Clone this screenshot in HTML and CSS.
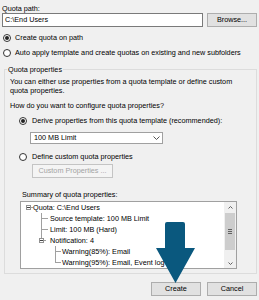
FILE: index.html
```html
<!DOCTYPE html>
<html lang="en">
<head>
<meta charset="utf-8">
<title>Create Quota</title>
<link rel="stylesheet" href="styles.css">
</head>
<body>
<div class="dialog">
  <div class="field-label">Quota path:</div>
  <div class="path-row">
    <div class="textbox">C:\End Users</div>
    <div class="btn browse">Browse...</div>
  </div>
  <div class="radio-row r1"><span class="radio checked"></span><span>Create quota on path</span></div>
  <div class="radio-row r2"><span class="radio"></span><span>Auto apply template and create quotas on existing and new subfolders</span></div>

  <fieldset class="group">
    <legend>Quota properties</legend>
    <p class="desc">You can either use properties from a quota template or define custom<br>quota properties.</p>
    <p class="question">How do you want to configure quota properties?</p>
    <div class="radio-row sub r3"><span class="radio checked"></span><span>Derive properties from this quota template (recommended):</span></div>
    <div class="select">
      <span>100 MB Limit</span>
      <svg class="chev" width="7" height="4" viewBox="0 0 7 4"><polyline points="0.5,0.5 3.5,3.5 6.5,0.5" fill="none" stroke="#555" stroke-width="1"/></svg>
    </div>
    <div class="radio-row sub r4"><span class="radio"></span><span>Define custom quota properties</span></div>
    <div class="btn disabled custom">Custom Properties ...</div>
    <div class="summary-label">Summary of quota properties:</div>
    <div class="tree">
      <div class="tree-body">
        <div class="row row0"><span class="node"><span class="ic"></span></span><span class="stub"></span><span class="txt">Quota: C:\End Users</span></div>
        <div class="row lvl1"><span class="tee"></span><span class="txt">Source template: 100 MB Limit</span></div>
        <div class="row lvl1"><span class="tee"></span><span class="txt">Limit: 100 MB (Hard)</span></div>
        <div class="row lvl1n"><span class="node up"><span class="ic"></span></span><span class="stub"></span><span class="txt">Notification: 4</span></div>
        <div class="row lvl2"><span class="tee"></span><span class="txt">Warning(85%): Email</span></div>
        <div class="row lvl2"><span class="ell"></span><span class="txt">Warning(95%): Email, Event log</span></div>
      </div>
      <div class="scrollbar">
        <div class="sb-btn sb-up"><svg width="5" height="3" viewBox="0 0 5 3"><polyline points="0.5,2.5 2.5,0.5 4.5,2.5" fill="none" stroke="#606060" stroke-width="1"/></svg></div>
        <div class="sb-thumb"><span class="grip"></span></div>
        <div class="sb-track"></div>
        <div class="sb-btn sb-down"><svg width="5" height="3" viewBox="0 0 5 3"><polyline points="0.5,0.5 2.5,2.5 4.5,0.5" fill="none" stroke="#606060" stroke-width="1"/></svg></div>
      </div>
    </div>
  </fieldset>

  <div class="actions">
    <div class="btn action">Create</div>
    <div class="btn action">Cancel</div>
  </div>
</div>

<svg class="arrow-overlay" width="259" height="300" viewBox="0 0 259 300">
  <path d="M165,224 Q165,222 167,222 L183,222 Q185,222 185,224 L185,248 L195,248 L175.5,283 L156,248 L165,248 Z" fill="#0a587e"/>
</svg>
</body>
</html>
```
FILE: styles.css
```css
html, body {
  width: 259px;
  height: 300px;
  overflow: hidden;
}
body {
  margin: 0;
  padding: 4px 2px 0 2px;
  box-sizing: border-box;
  background: #f0f0f0;
  font-family: "Liberation Sans", Arial, sans-serif;
  font-size: 7.25px;
  line-height: 9px;
  color: #000;
}
.dialog {
  display: flex;
  flex-direction: column;
}
.field-label {
  height: 9px;
}
.path-row {
  display: flex;
  gap: 4px;
  height: 14px;
}
.textbox {
  flex: 1;
  box-sizing: border-box;
  border: 1px solid #7a7a7a;
  background: #fff;
  padding-left: 2px;
  line-height: 12px;
}
.btn {
  box-sizing: border-box;
  height: 14px;
  border: 1px solid #adadad;
  background: #e1e1e1;
  text-align: center;
  line-height: 12px;
}
.browse {
  width: 50px;
}
.radio-row {
  display: flex;
  align-items: center;
  height: 9px;
  gap: 4px;
}
.radio {
  box-sizing: border-box;
  width: 8px;
  height: 8px;
  border: 1px solid #333;
  border-radius: 50%;
  background: #fff;
  margin-left: 1px;
  display: flex;
  align-items: center;
  justify-content: center;
}
.radio.checked::after {
  content: "";
  width: 4px;
  height: 4px;
  border-radius: 50%;
  background: #222;
}
.r1 { margin-top: 6px; }
.r2 { margin-top: 6px; }

.group {
  margin: 8px 0 0 2px;
  padding: 3px 5px 4px 5px;
  border: 1px solid #dcdcdc;
  min-width: 0;
}
.group legend {
  padding: 0 1px;
  margin-left: -3px;
  line-height: 9px;
}
.desc, .question {
  margin: 0;
  white-space: nowrap;
}
.question { margin-top: 6px; }
.sub { gap: 5px; }
.sub .radio { margin-left: 9px; }
.r3 { margin-top: 6px; }
.select {
  box-sizing: border-box;
  margin: 7px 0 0 20px;
  width: 133px;
  height: 12px;
  border: 1px solid #a0a0a0;
  background: #fff;
  display: flex;
  align-items: center;
  justify-content: space-between;
  padding: 0 2px 0 3px;
  line-height: 10px;
}
.r4 { margin-top: 8px; }
.custom {
  margin: 3px 0 0 22px;
  width: 81px;
  background: #f4f4f4;
  border-color: #c4c4c4;
  color: #a3a3a3;
}
.summary-label {
  margin: 12px 0 0 12px;
}
.tree {
  box-sizing: border-box;
  margin: 2px 0 0 10px;
  width: 217px;
  height: 68px;
  border: 1px solid #a0a0a0;
  background: #fff;
  display: flex;
}
.tree-body {
  flex: 1;
}
.row {
  display: flex;
  align-items: center;
  height: 11px;
  line-height: 11px;
  white-space: nowrap;
}
.row0 { padding-left: 5px; }
.lvl1 { padding-left: 20px; }
.lvl1n { padding-left: 18px; }
.lvl2 { padding-left: 34px; }
.node {
  align-self: stretch;
  width: 5px;
  display: flex;
  align-items: center;
  justify-content: center;
}
.node.up {
  background: linear-gradient(#a0a0a0, #a0a0a0) 2px 0 / 1px 50% no-repeat;
}
.ic {
  box-sizing: border-box;
  width: 5px;
  height: 5px;
  border: 1px solid #919191;
  background: #fff linear-gradient(#444, #444) 0 1px / 3px 1px no-repeat;
}
.stub {
  width: 2px;
  height: 1px;
  background: #a0a0a0;
}
.row0 .txt { margin-left: 0; }
.lvl1n .txt { margin-left: 4px; }
.tee, .ell {
  align-self: stretch;
  width: 7px;
  flex: none;
}
.tee {
  background:
    linear-gradient(#a0a0a0, #a0a0a0) 0 0 / 1px 100% no-repeat,
    linear-gradient(#a0a0a0, #a0a0a0) 0 5px / 100% 1px no-repeat;
}
.ell {
  background:
    linear-gradient(#a0a0a0, #a0a0a0) 0 0 / 1px 6px no-repeat,
    linear-gradient(#a0a0a0, #a0a0a0) 0 5px / 100% 1px no-repeat;
}
.lvl1 .txt { margin-left: 2px; }
.lvl2 .tee, .lvl2 .ell { width: 6px; }
.lvl2 .txt { margin-left: 1px; }

.scrollbar {
  width: 12px;
  background: #f0f0f0;
  display: flex;
  flex-direction: column;
}
.sb-btn {
  height: 11px;
  display: flex;
  align-items: center;
  justify-content: center;
}
.sb-down { height: 10px; }
.sb-thumb {
  height: 37px;
  margin: 0 1px;
  background: #cdcdcd;
  display: flex;
  align-items: center;
  justify-content: center;
}
.grip {
  width: 4px;
  height: 5px;
  background:
    linear-gradient(#606060, #606060) 0 0 / 4px 1px no-repeat,
    linear-gradient(#606060, #606060) 0 2px / 4px 1px no-repeat,
    linear-gradient(#606060, #606060) 0 4px / 4px 1px no-repeat;
}
.sb-track {
  flex: 1;
}

.actions {
  margin-top: 8px;
  display: flex;
  justify-content: flex-end;
  gap: 6px;
}
.action {
  width: 50px;
}
.arrow-overlay {
  position: absolute;
  left: 0;
  top: 0;
  pointer-events: none;
}
```
